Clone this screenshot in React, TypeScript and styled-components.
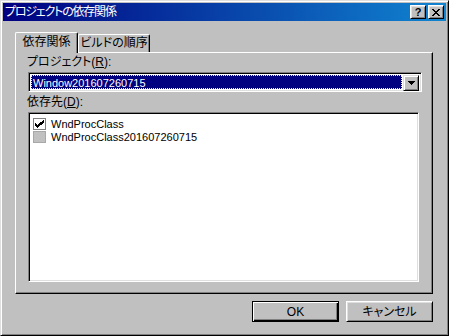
import * as React from 'react';
import styled, { createGlobalStyle } from 'styled-components';

const GlobalStyle = createGlobalStyle`
    html, body {
        margin: 0;
        padding: 0;
        background: #c0c0c0;
    }
    body {
        font-family: "Liberation Sans", "Noto Sans CJK JP", sans-serif;
        font-size: 12px;
        font-feature-settings: "palt";
        color: #000;
    }
`;

// Classic raised window frame
const Window = styled.div`
    width: 449px;
    height: 336px;
    box-sizing: border-box;
    display: flex;
    flex-direction: column;
    background: #c0c0c0;
    border-top: 1px solid #dfdfdf;
    border-left: 1px solid #dfdfdf;
    border-right: 1px solid #000;
    border-bottom: 1px solid #000;
    box-shadow: inset 1px 1px #fff, inset -1px -1px #808080;
    padding: 2px;
`;

const TitleBar = styled.div`
    height: 18px;
    display: flex;
    align-items: center;
    padding: 0 2px 0 2px;
    background: linear-gradient(to right, #000080, #1084d0);
    color: #fff;
`;

const TitleText = styled.span`
    flex: 1;
    font-size: 12px;
    line-height: 14px;
    letter-spacing: -1.2px;
    white-space: nowrap;
`;

const CaptionButton = styled.button`
    width: 16px;
    height: 14px;
    box-sizing: border-box;
    margin: 0;
    margin-left: ${(p: { $gap?: number }) => p.$gap ?? 0}px;
    padding: 0;
    display: flex;
    align-items: center;
    justify-content: center;
    background: #c0c0c0;
    border-top: 1px solid #fff;
    border-left: 1px solid #fff;
    border-right: 1px solid #000;
    border-bottom: 1px solid #000;
    box-shadow: inset 1px 1px #dfdfdf, inset -1px -1px #808080;
    font-family: "Liberation Sans", sans-serif;
    font-weight: bold;
    font-size: 11px;
    line-height: 12px;
    color: #000;
`;

const Body = styled.div`
    flex: 1;
    display: flex;
    flex-direction: column;
    padding: 11px 13px 11px 12px;
`;

const TabStrip = styled.div`
    display: flex;
    align-items: flex-end;
    height: 21px;
    margin-bottom: -1px;
    position: relative;
    z-index: 1;
`;

interface TabProps {
    $active?: boolean;
    $width: number;
}

const Tab = styled.div<TabProps>`
    width: ${p => p.$width}px;
    height: ${p => (p.$active ? 21 : 18)}px;
    margin-bottom: ${p => (p.$active ? 0 : 1)}px;
    box-sizing: border-box;
    background: #c0c0c0;
    border-top: 1px solid #fff;
    border-left: 1px solid #fff;
    border-right: 1px solid #000;
    border-radius: 2px 2px 0 0;
    box-shadow: inset -1px 0 #808080;
    display: flex;
    justify-content: center;
    padding-top: ${p => (p.$active ? 2 : 1)}px;
    font-size: 12px;
    line-height: 14px;
    white-space: nowrap;
`;

const Panel = styled.div`
    flex: 1;
    display: flex;
    flex-direction: column;
    box-sizing: border-box;
    border-top: 1px solid #fff;
    border-left: 1px solid #fff;
    border-right: 1px solid #000;
    border-bottom: 1px solid #000;
    box-shadow: inset -1px -1px #808080;
    padding: 0 12px 10px 12px;
`;

const FieldLabel = styled.div`
    margin: ${(p: { $top: number }) => p.$top}px 0 0 -1px;
    height: 14px;
    font-size: 12px;
    line-height: 14px;
    white-space: nowrap;
`;

const Sunken = styled.div`
    box-sizing: border-box;
    border-top: 1px solid #808080;
    border-left: 1px solid #808080;
    border-right: 1px solid #fff;
    border-bottom: 1px solid #fff;
    box-shadow: inset 1px 1px #000, inset -1px -1px #dfdfdf;
`;

const Combo = styled(Sunken)`
    margin-top: 3px;
    width: 394px;
    height: 20px;
    padding: 2px;
    display: flex;
    background: #fff;
`;

const ComboValue = styled.div`
    flex: 1;
    margin-right: 1px;
    background: #000080;
    color: #fff;
    outline: 1px dotted #ffff80;
    outline-offset: -1px;
    padding-left: 2px;
    font-size: 11px;
    line-height: 16px;
    white-space: nowrap;
`;

const DropButton = styled.div`
    width: 16px;
    height: 16px;
    box-sizing: border-box;
    background: #c0c0c0;
    border-top: 1px solid #dfdfdf;
    border-left: 1px solid #dfdfdf;
    border-right: 1px solid #000;
    border-bottom: 1px solid #000;
    box-shadow: inset 1px 1px #fff, inset -1px -1px #808080;
    display: flex;
    align-items: center;
    justify-content: center;
`;

const ListBox = styled(Sunken)`
    margin-top: 3px;
    width: 391px;
    height: 170px;
    background: #fff;
    padding: 5px 2px 2px 4px;
`;

const ListItem = styled.div`
    height: 13px;
    display: flex;
    align-items: flex-start;
    gap: 5px;
    font-size: 11px;
    line-height: 12px;
    white-space: nowrap;
`;

const CheckBox = styled.div<{ $checked?: boolean }>`
    width: 13px;
    height: 12px;
    box-sizing: border-box;
    border: 1px solid ${p => (p.$checked ? '#808080' : '#a8a8a8')};
    background: ${p => (p.$checked ? '#fff' : '#c0c0c0')};
    display: flex;
    align-items: center;
    justify-content: center;
`;

const ButtonRow = styled.div`
    display: flex;
    justify-content: flex-end;
    gap: 7px;
    margin-top: 7px;
`;

const PushButton = styled.button<{ $default?: boolean }>`
    width: 87px;
    height: 21px;
    box-sizing: border-box;
    margin: 0;
    padding: 0;
    background: #c0c0c0;
    font-family: "Liberation Sans", "Noto Sans CJK JP", sans-serif;
    font-feature-settings: "palt";
    font-size: 12px;
    line-height: 14px;
    color: #000;
    border-top: 1px solid ${p => (p.$default ? '#000' : '#fff')};
    border-left: 1px solid ${p => (p.$default ? '#000' : '#fff')};
    border-right: 1px solid #000;
    border-bottom: 1px solid #000;
    box-shadow: ${p => (p.$default
        ? 'inset 1px 1px #fff, inset -1px -1px #000, inset -2px -2px #808080'
        : 'inset 1px 1px #dfdfdf, inset -1px -1px #808080')};
`;

const CloseGlyph = () => (
    <svg width="8" height="7" viewBox="0 0 8 7" shapeRendering="crispEdges">
        <path d="M0 0h2v1h-2zM6 0h2v1h-2zM1 1h2v1h-2zM5 1h2v1h-2zM2 2h4v1h-4zM3 3h2v1h-2zM2 4h4v1h-4zM1 5h2v1h-2zM5 5h2v1h-2zM0 6h2v1h-2zM6 6h2v1h-2z" fill="#000" />
    </svg>
);

const ArrowGlyph = () => (
    <svg width="7" height="4" viewBox="0 0 7 4" shapeRendering="crispEdges">
        <path d="M0 0h7v1h-7zM1 1h5v1h-5zM2 2h3v1h-3zM3 3h1v1h-1z" fill="#000" />
    </svg>
);

const CheckGlyph = () => (
    <svg width="9" height="8" viewBox="0 0 9 8" shapeRendering="crispEdges">
        <path d="M8 0h1v3h-1zM7 1h1v3h-1zM6 2h1v3h-1zM0 3h1v3h-1zM1 4h1v3h-1zM2 5h1v3h-1zM3 4h1v3h-1zM4 3h1v3h-1zM5 2h1v3h-1z" fill="#000" />
    </svg>
);

const dependencies = [
    { name: 'WndProcClass', checked: true },
    { name: 'WndProcClass201607260715', checked: false },
];

export default function App() {
    return (
        <>
            <GlobalStyle />
            <Window>
                <TitleBar>
                    <TitleText>プロジェクトの依存関係</TitleText>
                    <CaptionButton>?</CaptionButton>
                    <CaptionButton $gap={2}><CloseGlyph /></CaptionButton>
                </TitleBar>

                <Body>
                    <TabStrip>
                        <Tab $active $width={63}>依存関係</Tab>
                        <Tab $width={72}>ビルドの順序</Tab>
                    </TabStrip>

                    <Panel>
                        <FieldLabel $top={2}>プロジェクト(<u>R</u>):</FieldLabel>
                        <Combo>
                            <ComboValue>Window201607260715</ComboValue>
                            <DropButton><ArrowGlyph /></DropButton>
                        </Combo>

                        <FieldLabel $top={3}>依存先(<u>D</u>):</FieldLabel>
                        <ListBox>
                            {dependencies.map(dep => (
                                <ListItem key={dep.name}>
                                    <CheckBox $checked={dep.checked}>
                                        {dep.checked && <CheckGlyph />}
                                    </CheckBox>
                                    <span>{dep.name}</span>
                                </ListItem>
                            ))}
                        </ListBox>
                    </Panel>

                    <ButtonRow>
                        <PushButton $default>OK</PushButton>
                        <PushButton>キャンセル</PushButton>
                    </ButtonRow>
                </Body>
            </Window>
        </>
    );
}
